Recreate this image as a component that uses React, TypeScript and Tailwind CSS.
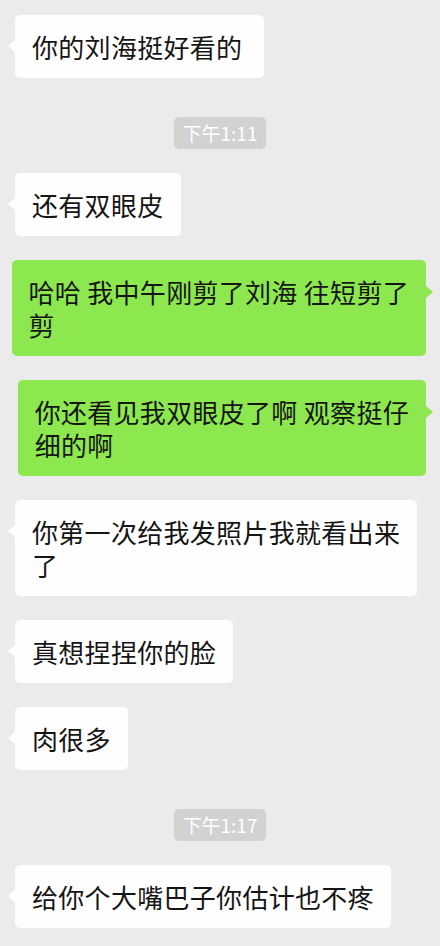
import React from "react";

type Msg =
  | { kind: "in" | "out"; lines: string[]; padRight?: string }
  | { kind: "time"; text: string };

const messages: Msg[] = [
  { kind: "in", lines: ["你的刘海挺好看的"], padRight: "pr-[22px]" },
  { kind: "time", text: "下午1:11" },
  { kind: "in", lines: ["还有双眼皮"] },
  { kind: "out", lines: ["哈哈 我中午刚剪了刘海 往短剪了", "剪"] },
  { kind: "out", lines: ["你还看见我双眼皮了啊 观察挺仔", "细的啊"] },
  { kind: "in", lines: ["你第一次给我发照片我就看出来", "了"] },
  { kind: "in", lines: ["真想捏捏你的脸"] },
  { kind: "in", lines: ["肉很多"] },
  { kind: "time", text: "下午1:17" },
  { kind: "in", lines: ["给你个大嘴巴子你估计也不疼"] },
];

const font = {
  fontFamily: '"Noto Sans CJK SC", "Noto Sans", "Liberation Sans", sans-serif',
};

function Bubble({ m }: { m: Extract<Msg, { kind: "in" | "out" }> }) {
  const out = m.kind === "out";
  return (
    <div className={`flex ${out ? "justify-end pr-[14px]" : "justify-start pl-[15px]"}`}>
      <div
        className={`relative rounded-[5px] py-[15px] pl-[17px] ${m.padRight ?? "pr-[17px]"} text-[26px] leading-[33px] tracking-[0.3px] text-[#151515] ${
          out ? "bg-[#8de84f]" : "bg-[#fefefe]"
        }`}
      >
        {m.lines.map((l, i) => (
          <div key={i} className="whitespace-pre">
            {l}
          </div>
        ))}
        {out ? (
          <span className="absolute right-[-7px] top-[26px] h-0 w-0 border-y-[6px] border-l-[7px] border-y-transparent border-l-[#8de84f]" />
        ) : (
          <span className="absolute left-[-7px] top-[25px] h-0 w-0 border-y-[6px] border-r-[7px] border-y-transparent border-r-[#fefefe]" />
        )}
      </div>
    </div>
  );
}

function TimeTag({ text }: { text: string }) {
  return (
    <div className="flex justify-center">
      <div className="flex h-[32px] items-center rounded-[5px] bg-[#d2d2d2] px-[9px] text-[19px] text-white">
        {text}
      </div>
    </div>
  );
}

export default function App() {
  return (
    <div className="h-[946px] w-[440px] overflow-hidden bg-[#ebebeb] pt-[15px]" style={font}>
      {messages.map((m, i) => {
        const gap = i === 0 ? "" : m.kind === "time" ? "mt-[39px]" : "mt-[24px]";
        return (
          <div key={i} className={gap}>
            {m.kind === "time" ? <TimeTag text={m.text} /> : <Bubble m={m} />}
          </div>
        );
      })}
    </div>
  );
}
